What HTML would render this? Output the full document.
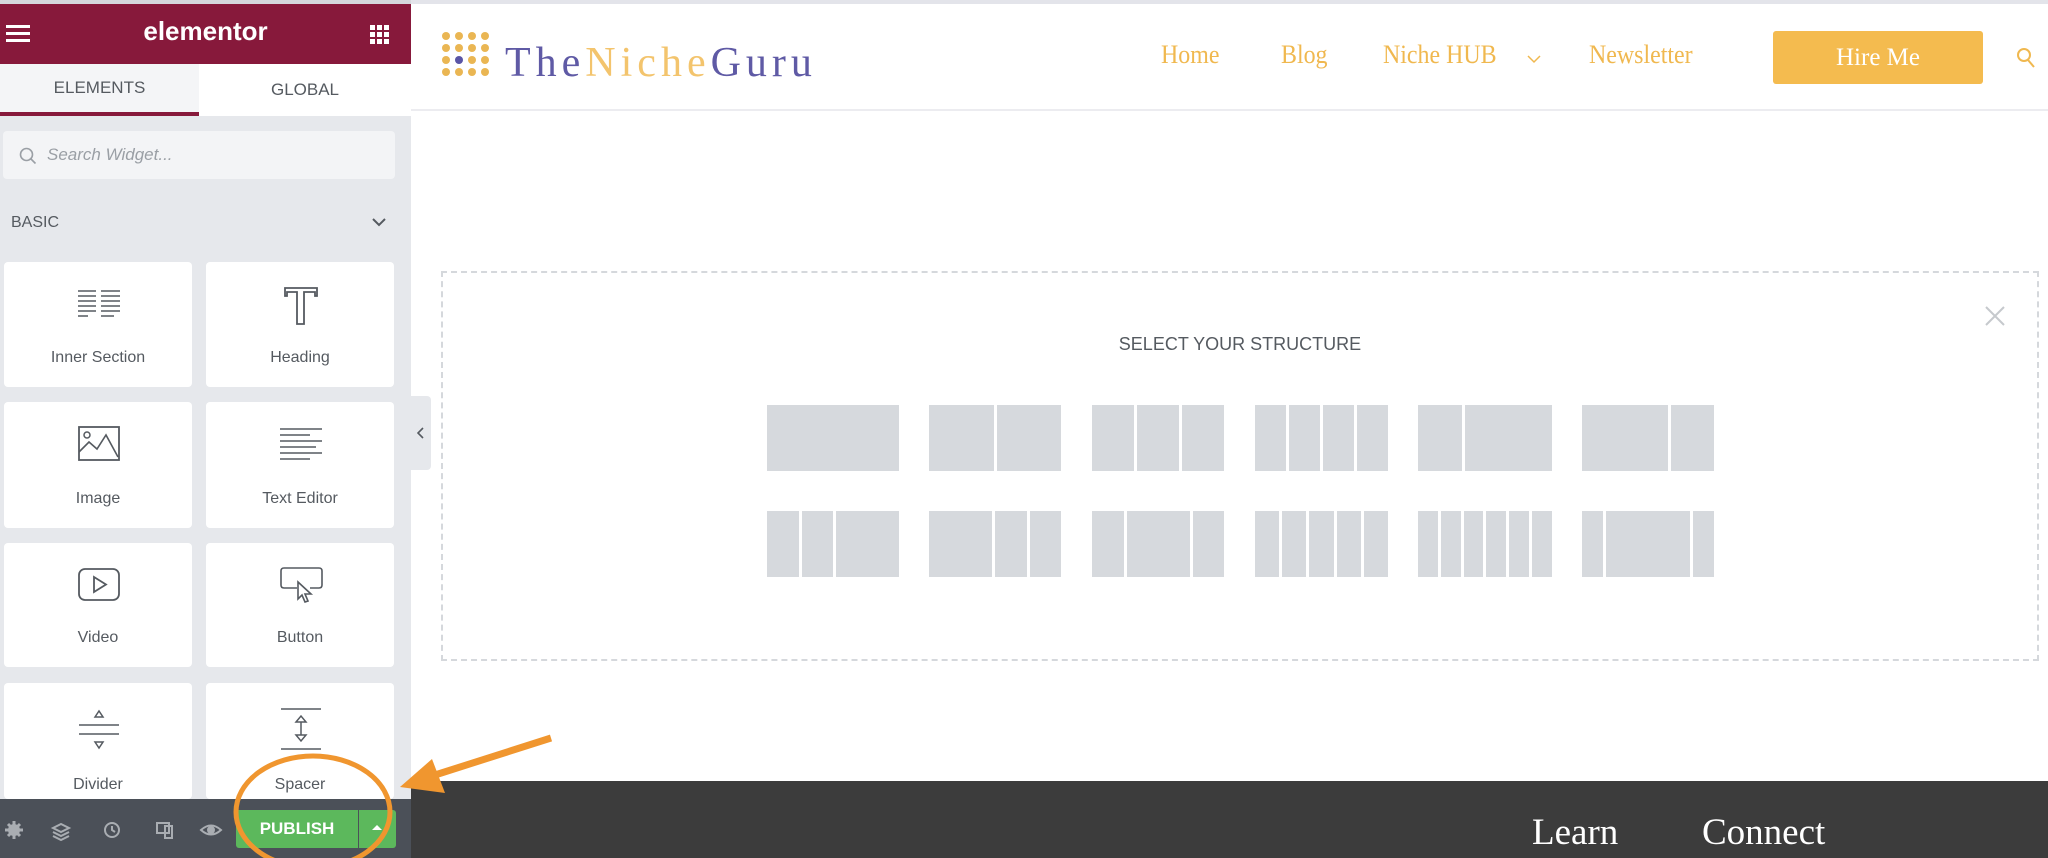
<!DOCTYPE html>
<html><head><meta charset="utf-8"><style>
*{margin:0;padding:0;box-sizing:border-box}
body{width:2048px;height:858px;overflow:hidden;background:#fff;font-family:"Liberation Sans",sans-serif;position:relative}
.abs{position:absolute}
#side{left:0;top:0;width:411px;height:858px;background:#e6e8ec;border-top:4px solid #d5d7dc}
#hdr{left:0;top:4px;width:411px;height:60px;background:#87193b;color:#fff}
.tab{top:64px;height:52px;font-size:17px;color:#555a60;display:flex;align-items:center;justify-content:center}
.card{background:#fff;border-radius:4px;width:188px;display:flex;flex-direction:column;align-items:center}
.card span{position:absolute;bottom:20px;font-size:16px;color:#555a60;width:100%;text-align:center}
.card svg{position:absolute;top:24px;left:74px}
.st{position:absolute;height:66px;display:flex;gap:3px}
.st div{background:#d6d9dd;height:100%}
.nav{top:40px;font-family:"Liberation Serif",serif;font-size:26px;color:#f0b84f;transform:scaleX(0.92);transform-origin:left}
</style></head><body>
<div id="side" class="abs"></div>
<div id="hdr" class="abs">
 <div class="abs" style="left:6px;top:21px;width:24px;height:3px;background:#fff;box-shadow:0 7px 0 #fff,0 14px 0 #fff"></div>
 <div class="abs" style="left:0;width:411px;top:12px;text-align:center;font-size:26px;font-weight:bold;letter-spacing:0px">elementor</div>
 <svg class="abs" style="left:370px;top:21px" width="20" height="20"><g fill="#fff"><rect x="0" y="0" width="5" height="5"/><rect x="7" y="0" width="5" height="5"/><rect x="14" y="0" width="5" height="5"/><rect x="0" y="7" width="5" height="5"/><rect x="7" y="7" width="5" height="5"/><rect x="14" y="7" width="5" height="5"/><rect x="0" y="14" width="5" height="5"/><rect x="7" y="14" width="5" height="5"/><rect x="14" y="14" width="5" height="5"/></g></svg>
</div>
<div class="abs tab" style="left:0;width:199px;background:#f4f5f7;border-bottom:4px solid #87193b">ELEMENTS</div>
<div class="abs tab" style="left:199px;width:212px;background:#fff">GLOBAL</div>
<div class="abs" style="left:3px;top:131px;width:392px;height:48px;background:#f3f4f6;border-radius:4px"></div>
<svg class="abs" style="left:19px;top:147px" width="18" height="18"><circle cx="7.5" cy="7.5" r="6" fill="none" stroke="#9a9fa5" stroke-width="1.6"/><line x1="12" y1="12" x2="16.5" y2="16.5" stroke="#9a9fa5" stroke-width="1.6"/></svg>
<div class="abs" style="left:47px;top:145px;font-size:17px;font-style:italic;color:#9a9fa5">Search Widget...</div>
<div class="abs" style="left:11px;top:214px;font-size:16px;color:#555a60">BASIC</div>
<svg class="abs" style="left:372px;top:217px" width="14" height="10"><path d="M1 2 L7 8 L13 2" fill="none" stroke="#555a60" stroke-width="2"/></svg>

<div class="abs card" style="left:4px;top:262px;height:125px"><svg width="42" height="32"><g stroke="#555a60" stroke-width="1.5"><path d="M0 5H18M0 10H18M0 15H18M0 20H18M0 25H18M0 30H10M23 5H42M23 10H42M23 15H42M23 20H42M23 25H42M23 30H36"/></g></svg><span>Inner Section</span></div>
<div class="abs card" style="left:206px;top:262px;height:125px"><svg width="42" height="42"><path d="M5 2H37V10H35V6H24V38H17V6H7V10H5Z" fill="none" stroke="#555a60" stroke-width="1.8"/></svg><span>Heading</span></div>
<div class="abs card" style="left:4px;top:402px;height:126px"><svg width="42" height="36"><rect x="1" y="1" width="40" height="33" fill="none" stroke="#555a60" stroke-width="1.8"/><circle cx="9" cy="9" r="3" fill="none" stroke="#555a60" stroke-width="1.5"/><path d="M1 26L11 16L19 23L28 9L40 31" fill="none" stroke="#555a60" stroke-width="1.6"/></svg><span>Image</span></div>
<div class="abs card" style="left:206px;top:402px;height:126px"><svg width="42" height="36"><path d="M0 3H42M0 9H30M0 15H42M0 21H36M0 27H42M0 33H30" stroke="#555a60" stroke-width="1.5"/></svg><span>Text Editor</span></div>
<div class="abs card" style="left:4px;top:543px;height:124px"><svg width="42" height="36"><rect x="1" y="2" width="40" height="31" rx="6" fill="none" stroke="#555a60" stroke-width="1.8"/><path d="M16 10L28 17.5L16 25Z" fill="none" stroke="#555a60" stroke-width="1.8"/></svg><span>Video</span></div>
<div class="abs card" style="left:206px;top:543px;height:124px"><svg width="44" height="36"><path d="M17 21H4Q1 21 1 18V4Q1 1 4 1H39Q42 1 42 4V18Q42 21 39 21H30" fill="none" stroke="#555a60" stroke-width="1.6"/><path d="M18 15V32L22 28L25 35L28 34L25 27L31 27Z" fill="#fff" stroke="#555a60" stroke-width="1.6"/></svg><span>Button</span></div>
<div class="abs card" style="left:4px;top:683px;height:116px"><svg width="42" height="44"><path d="M17 10L21 4L25 10Z M17 35L21 41L25 35Z" fill="none" stroke="#555a60" stroke-width="1.5"/><path d="M1 18H41M1 27H41" stroke="#555a60" stroke-width="1.6"/></svg><span style="bottom:5px">Divider</span></div>
<div class="abs card" style="left:206px;top:683px;height:116px"><svg width="42" height="44"><path d="M1 2H41M1 42H41" stroke="#555a60" stroke-width="1.6"/><path d="M16 15L21 9L26 15Z M16 28L21 34L26 28Z M21 15V28" fill="none" stroke="#555a60" stroke-width="1.5"/></svg><span style="bottom:5px">Spacer</span></div>

<div class="abs" style="left:0;top:799px;width:411px;height:59px;background:#4b5058"></div>
<svg class="abs" style="left:3px;top:819px" width="230" height="22"><g fill="none" stroke="#a9adb2" stroke-width="2"><circle cx="11" cy="11" r="5" fill="#a9adb2"/><path d="M11 2V20M2 11H20M5 5L17 17M17 5L5 17" stroke-width="3"/><path d="M50 9L58 5L66 9L58 13Z M50 13L58 17L66 13 M50 17L58 21L66 17"/><circle cx="109" cy="11" r="7"/><path d="M109 7V11L112 13"/><rect x="154" y="4" width="12" height="10"/><rect x="162" y="7" width="7" height="12"/><path d="M198 11Q208 2 218 11Q208 20 198 11Z"/><circle cx="208" cy="11" r="3" fill="#a9adb2"/></g></svg>
<div class="abs" style="left:236px;top:810px;width:122px;height:38px;background:#5cb85c;color:#fff;font-weight:bold;font-size:17px;display:flex;align-items:center;justify-content:center;border-radius:3px 0 0 3px">PUBLISH</div>
<div class="abs" style="left:359px;top:810px;width:37px;height:38px;background:#5cb85c;border-radius:0 3px 3px 0"></div>
<svg class="abs" style="left:372px;top:824px" width="10" height="8"><path d="M0 6L5 1L10 6Z" fill="#fff"/></svg>

<div class="abs" style="left:411px;top:396px;width:20px;height:74px;background:#e6e8ec;border-radius:0 4px 4px 0"></div>
<svg class="abs" style="left:417px;top:427px" width="8" height="12"><path d="M6 1L1 6L6 11" fill="none" stroke="#555a60" stroke-width="1.6"/></svg>

<div class="abs" style="left:411px;top:0;width:1637px;height:4px;background:#e3e4ea"></div>
<div class="abs" style="left:411px;top:109px;width:1637px;height:2px;background:#ececf0"></div>
<svg class="abs" style="left:441px;top:31px" width="52" height="52"><g fill="#eab653"><circle cx="5" cy="5" r="4"/><circle cx="18" cy="5" r="4"/><circle cx="31" cy="5" r="4"/><circle cx="44" cy="5" r="4"/><circle cx="5" cy="17" r="4"/><circle cx="18" cy="17" r="4"/><circle cx="31" cy="17" r="4"/><circle cx="44" cy="17" r="4"/><circle cx="5" cy="29" r="4"/><circle cx="31" cy="29" r="4"/><circle cx="44" cy="29" r="4"/><circle cx="5" cy="41" r="4"/><circle cx="18" cy="41" r="4"/><circle cx="31" cy="41" r="4"/><circle cx="44" cy="41" r="4"/></g><circle cx="18" cy="29" r="4" fill="#5a55a6"/></svg>
<div class="abs" style="left:505px;top:38px;font-family:'Liberation Serif',serif;font-size:42px;letter-spacing:5px;color:#5f5aa5;line-height:50px">The<span style="color:#f3c46d">Niche</span>Guru</div>
<div class="abs nav" style="left:1161px">Home</div>
<div class="abs nav" style="left:1281px">Blog</div>
<div class="abs nav" style="left:1383px">Niche HUB</div>
<svg class="abs" style="left:1527px;top:55px" width="14" height="9"><path d="M1 1L7 7L13 1" fill="none" stroke="#f0b84f" stroke-width="1.5"/></svg>
<div class="abs nav" style="left:1589px">Newsletter</div>
<div class="abs" style="left:1773px;top:31px;width:210px;height:53px;background:#f4bb4f;border-radius:3px;color:#fff;font-family:'Liberation Serif',serif;font-size:25px;display:flex;align-items:center;justify-content:center">Hire Me</div>
<svg class="abs" style="left:2016px;top:47px" width="20" height="22"><circle cx="8" cy="8" r="6" fill="none" stroke="#f0b84f" stroke-width="2"/><line x1="12" y1="13" x2="18" y2="20" stroke="#f0b84f" stroke-width="2"/></svg>

<div class="abs" style="left:441px;top:271px;width:1598px;height:390px;border:2px dashed #d5d8dc"></div>
<svg class="abs" style="left:1985px;top:306px" width="20" height="20"><path d="M1 1L19 19M19 1L1 19" stroke="#c6c9cd" stroke-width="2"/></svg>
<div class="abs" style="left:441px;width:1598px;top:334px;text-align:center;font-size:18px;color:#555a60">SELECT YOUR STRUCTURE</div>

<div class="st" style="left:767px;top:405px;width:132px"><div style="flex:1"></div></div>
<div class="st" style="left:929px;top:405px;width:132px"><div style="flex:1"></div><div style="flex:1"></div></div>
<div class="st" style="left:1092px;top:405px;width:132px"><div style="flex:1"></div><div style="flex:1"></div><div style="flex:1"></div></div>
<div class="st" style="left:1255px;top:405px;width:133px"><div style="flex:1"></div><div style="flex:1"></div><div style="flex:1"></div><div style="flex:1"></div></div>
<div class="st" style="left:1418px;top:405px;width:134px"><div style="flex:1"></div><div style="flex:2"></div></div>
<div class="st" style="left:1582px;top:405px;width:132px"><div style="flex:2"></div><div style="flex:1"></div></div>

<div class="st" style="left:767px;top:511px;width:132px"><div style="flex:1"></div><div style="flex:1"></div><div style="flex:2"></div></div>
<div class="st" style="left:929px;top:511px;width:132px"><div style="flex:2"></div><div style="flex:1"></div><div style="flex:1"></div></div>
<div class="st" style="left:1092px;top:511px;width:132px"><div style="flex:1"></div><div style="flex:2"></div><div style="flex:1"></div></div>
<div class="st" style="left:1255px;top:511px;width:133px"><div style="flex:1"></div><div style="flex:1"></div><div style="flex:1"></div><div style="flex:1"></div><div style="flex:1"></div></div>
<div class="st" style="left:1418px;top:511px;width:134px"><div style="flex:1"></div><div style="flex:1"></div><div style="flex:1"></div><div style="flex:1"></div><div style="flex:1"></div><div style="flex:1"></div></div>
<div class="st" style="left:1582px;top:511px;width:132px"><div style="flex:1"></div><div style="flex:4"></div><div style="flex:1"></div></div>

<div class="abs" style="left:411px;top:781px;width:1637px;height:77px;background:#3c3c3c"></div>
<div class="abs" style="left:1532px;top:811px;font-family:'Liberation Serif',serif;font-size:37px;color:#fff">Learn</div>
<div class="abs" style="left:1702px;top:811px;font-family:'Liberation Serif',serif;font-size:37px;color:#fff">Connect</div>

<svg class="abs" style="left:0;top:0" width="2048" height="858"><ellipse cx="313" cy="812" rx="77" ry="56" fill="none" stroke="#f0962f" stroke-width="5"/><line x1="551" y1="738" x2="435" y2="775" stroke="#f0962f" stroke-width="7"/><path d="M400 787L432 759L445 793Z" fill="#f0962f"/></svg>
</body></html>
